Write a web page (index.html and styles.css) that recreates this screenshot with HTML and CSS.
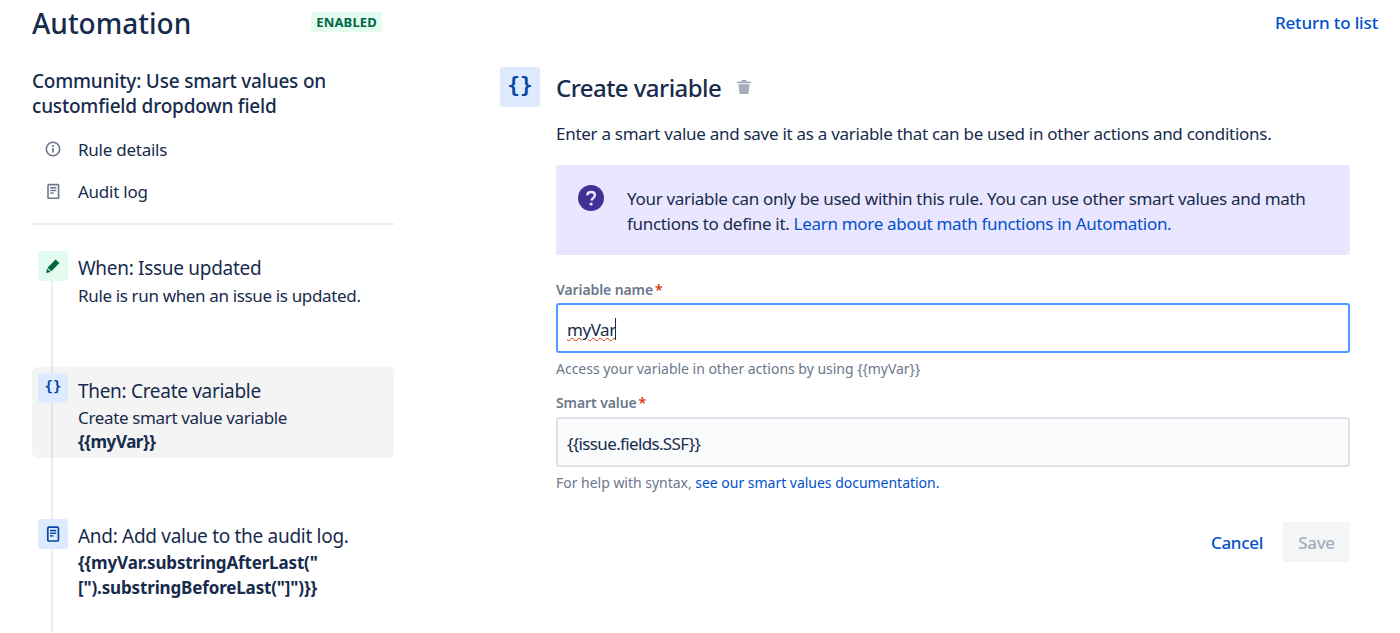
FILE: index.html
```html
<!DOCTYPE html>
<html lang="en">
<head>
<meta charset="utf-8">
<title>Automation</title>
<link rel="stylesheet" href="styles.css">
</head>
<body>
<div class="page">
  <aside class="side">
    <div class="side-head">
      <h1 class="app-title">Automation</h1>
      <span class="lozenge">ENABLED</span>
    </div>
    <h2 class="rule-name">Community: Use smart values on customfield dropdown field</h2>
    <nav class="side-nav">
      <div class="nav-row">
        <svg class="nav-icon" viewBox="0 0 16 16"><circle cx="8" cy="8" r="6.7" fill="none" stroke="#6B778C" stroke-width="1.6"/><rect x="7.1" y="7" width="1.8" height="4.6" rx=".6" fill="#6B778C"/><circle cx="8" cy="5" r="1.1" fill="#6B778C"/></svg>
        <span>Rule details</span>
      </div>
      <div class="nav-row">
        <svg class="nav-icon" viewBox="0 0 16 16"><rect x="3" y="1.6" width="10.6" height="13.8" rx="1" fill="none" stroke="#6B778C" stroke-width="1.6"/><rect x="5.2" y="4" width="6.2" height="1.6" fill="#6B778C"/><rect x="5.2" y="6.8" width="6.2" height="1.4" fill="#6B778C"/><rect x="5.2" y="9.4" width="3.4" height="1.4" fill="#6B778C"/></svg>
        <span>Audit log</span>
      </div>
    </nav>
    <div class="steps">
      <div class="step step-when">
        <span class="step-icon green">
          <svg viewBox="0 0 16 16" class="glyph"><path d="M10.6 1.6 14.4 5 6.4 13.2 2.6 9.8Z" fill="#006644"/><path d="M2.1 10.6 5.6 13.9 1 15Z" fill="#006644"/></svg>
        </span>
        <div class="step-body">
          <div class="step-title">When: Issue updated</div>
          <div class="step-text">Rule is run when an issue is updated.</div>
        </div>
      </div>
      <div class="step step-then">
        <span class="step-icon blue"><span class="braces-small">{}</span></span>
        <div class="step-body">
          <div class="step-title">Then: Create variable</div>
          <div class="step-text">Create smart value variable<br><b>{{myVar}}</b></div>
        </div>
      </div>
      <div class="step step-and">
        <span class="step-icon blue">
          <svg viewBox="0 0 16 16" class="glyph"><rect x="2.8" y="1.2" width="10.6" height="13.8" rx="1" fill="none" stroke="#0747A6" stroke-width="1.7"/><rect x="5" y="3.8" width="6.2" height="1.6" fill="#0747A6"/><rect x="5" y="6.6" width="6.2" height="1.4" fill="#0747A6"/><rect x="5" y="9.2" width="3.4" height="1.4" fill="#0747A6"/></svg>
        </span>
        <div class="step-body">
          <div class="step-title">And: Add value to the audit log.</div>
          <div class="step-text"><b>{{myVar.substringAfterLast("<br>[").substringBeforeLast("]")}}</b></div>
        </div>
      </div>
    </div>
  </aside>
  <main class="main">
    <div class="top-link-row"><a class="link return-link" href="#">Return to list</a></div>
    <div class="editor">
      <span class="editor-icon"><span class="braces-large">{}</span></span>
      <div class="editor-body">
        <div class="editor-head">
          <h2 class="editor-title">Create variable</h2>
          <svg class="trash" viewBox="0 0 16 16"><path d="M1 2.6H5.2L6 1H10L10.8 2.6H15V4.2H1Z" fill="#A5ADBA"/><path d="M2.4 5.2H13.6L12.4 15H3.6Z" fill="#A5ADBA"/></svg>
        </div>
        <p class="editor-desc">Enter a smart value and save it as a variable that can be used in other actions and conditions.</p>
        <div class="panel">
          <svg class="panel-icon" viewBox="0 0 26 26"><circle cx="13" cy="13" r="13" fill="#403294"/><path d="M9.2 10.3C9.4 8.2 11 7 13.1 7c2.2 0 3.8 1.3 3.8 3.2 0 1.5-.8 2.3-1.9 3-.9.6-1.2 1-1.2 1.9v.4" fill="none" stroke="#EAE6FF" stroke-width="2.4"/><circle cx="13.1" cy="19" r="1.6" fill="#EAE6FF"/></svg>
          <p class="panel-text">Your variable can only be used within this rule. You can use other smart values and math functions to define it. <a class="link" href="#">Learn more about math functions in Automation.</a></p>
        </div>
        <div class="field field-name">
          <div class="field-label">Variable name<span class="req">*</span></div>
          <div class="input input-focus"><span class="typo">myVar</span><span class="caret"></span></div>
          <div class="field-help">Access your variable in other actions by using {{myVar}}</div>
        </div>
        <div class="field field-value">
          <div class="field-label">Smart value<span class="req">*</span></div>
          <div class="input">{{issue.fields.SSF}}</div>
          <div class="field-help">For help with syntax, <a class="link" href="#">see our smart values documentation.</a></div>
        </div>
        <div class="actions">
          <a class="link cancel" href="#">Cancel</a>
          <span class="save">Save</span>
        </div>
      </div>
    </div>
  </main>
</div>
</body>
</html>
```

FILE: styles.css
```css
* { box-sizing: border-box; }
html, body { margin: 0; height: 633px; overflow: hidden; background: #fff; }
body { font-family: "Noto Sans", "Open Sans", sans-serif; color: #172B4D; font-size: 16px; }
h1, h2, p { margin: 0; }
.link { color: #0052CC; text-decoration: none; }
.page { display: flex; height: 633px; padding-left: 32px; }

.side { width: 362px; flex: none; }
.side-head { display: flex; justify-content: space-between; height: 48px; padding-bottom: 2px; align-items: center; padding-right: 12px; }
.app-title { font-size: 28px; line-height: 46px; font-weight: 500; letter-spacing: 0; }
.lozenge { background: #E3FCEF; color: #006644; font-size: 13px; font-weight: 700; line-height: 20px; height: 20px; padding: 0 5px; border-radius: 3px; margin-top: -2px; letter-spacing: .18px; }
.rule-name { font-size: 19px; line-height: 25px; font-weight: 500; margin-top: 21px; letter-spacing: -.2px; }
.side-nav { margin-top: 9px; padding-bottom: 11px; border-bottom: 2px solid #EBECF0; }
.nav-row { display: flex; align-items: center; height: 42px; padding-left: 13px; font-size: 17px; letter-spacing: -.25px; gap: 17px; }
.nav-icon { width: 16px; height: 16px; flex: none; }

.steps { position: relative; padding-top: 26px; height: 408px; }
.steps::before { content: ""; position: absolute; left: 19px; top: 40px; bottom: 0; width: 2px; background: #EBECF0; }
.step { position: relative; display: flex; gap: 10px; padding-left: 6px; border-radius: 5px; }
.step-when { height: 116px; }
.step-then { height: 91px; padding-top: 6px; background: rgba(0, 0, 0, .045); }
.step-and { margin-top: 61px; }
.step-icon { width: 30px; height: 30px; flex: none; border-radius: 3px; display: flex; align-items: center; justify-content: center; }
.green { background: #E3FCEF; }
.blue { background: #DEEBFF; }
.glyph { width: 16px; height: 16px; }
.braces-small { font-family: "DejaVu Sans Mono", monospace; font-weight: 700; font-size: 14px; color: #0747A6; line-height: 20px; margin-top: -5px; }
.step-title { font-size: 19px; line-height: 26px; letter-spacing: -.3px; margin-top: 4px; }
.step-then .step-title { margin-top: 5px; }
.step-text { font-size: 17px; line-height: 24px; letter-spacing: -.35px; margin-top: 3px; }
.step-then .step-text { margin-top: 2px; }
.step-then .step-text b { letter-spacing: -.45px; }
.step-and .step-text { line-height: 25px; margin-top: 1px; }
.step-text b { font-weight: 700; letter-spacing: -.15px; }

.main { flex: 1; min-width: 0; padding-left: 106px; padding-right: 22px; }
.top-link-row { display: flex; justify-content: flex-end; height: 44px; align-items: center; }
.return-link { font-size: 17px; font-weight: 500; letter-spacing: -.15px; }
.editor { display: flex; gap: 16px; margin-top: 23px; padding-right: 28px; }
.editor-icon { width: 40px; height: 40px; flex: none; background: #DEEBFF; border-radius: 3px; display: flex; align-items: center; justify-content: center; }
.braces-large { font-family: "DejaVu Sans Mono", monospace; font-weight: 700; font-size: 21px; color: #0747A6; line-height: 30px; margin-top: -4px; }
.editor-body { flex: 1; min-width: 0; }
.editor-head { display: flex; align-items: center; gap: 15px; height: 42px; }
.editor-title { font-size: 24px; font-weight: 500; line-height: 42px; letter-spacing: -.55px; }
.trash { width: 16px; height: 16px; margin-top: -3px; }
.editor-desc { font-size: 17px; line-height: 24px; letter-spacing: -.28px; margin-top: 13px; }
.panel { display: flex; gap: 23px; background: #EAE6FF; border-radius: 3px; height: 90px; margin-top: 19px; padding: 20px 22px 0; }
.panel-icon { width: 26px; height: 26px; flex: none; }
.panel-text { font-size: 17px; line-height: 25px; letter-spacing: -.31px; margin-top: 1px; }
.field-name { margin-top: 26px; }
.field-value { margin-top: 15px; }
.field-label { font-size: 14px; font-weight: 600; line-height: 18px; color: #6B778C; letter-spacing: -.1px; }
.req { color: #DE350B; margin-left: 2px; }
.input { height: 50px; margin-top: 4px; border: 2px solid #DFE1E6; background: #FAFBFC; border-radius: 3px; padding: 2px 9px 0; display: flex; align-items: center; font-size: 17px; letter-spacing: -.65px; }
.field-value .input { margin-top: 5px; }
.input-focus { border-color: #4C9AFF; background: #fff; letter-spacing: -.45px; }
.typo { text-decoration: underline wavy #DE350B 1px; text-underline-offset: 1px; }
.caret { width: 1px; height: 22px; background: #172B4D; margin-left: -1px; }
.field-help { font-size: 14px; line-height: 20px; color: #6B778C; letter-spacing: -.02px; margin-top: 6px; }
.actions { display: flex; justify-content: flex-end; align-items: center; gap: 20px; margin-top: 29px; }
.cancel { font-size: 17px; font-weight: 500; letter-spacing: -.3px; }
.save { width: 67px; height: 40px; background: #F4F5F7; color: #A5ADBA; border-radius: 3px; display: flex; align-items: center; justify-content: center; font-size: 17px; font-weight: 500; letter-spacing: -.3px; }
```
